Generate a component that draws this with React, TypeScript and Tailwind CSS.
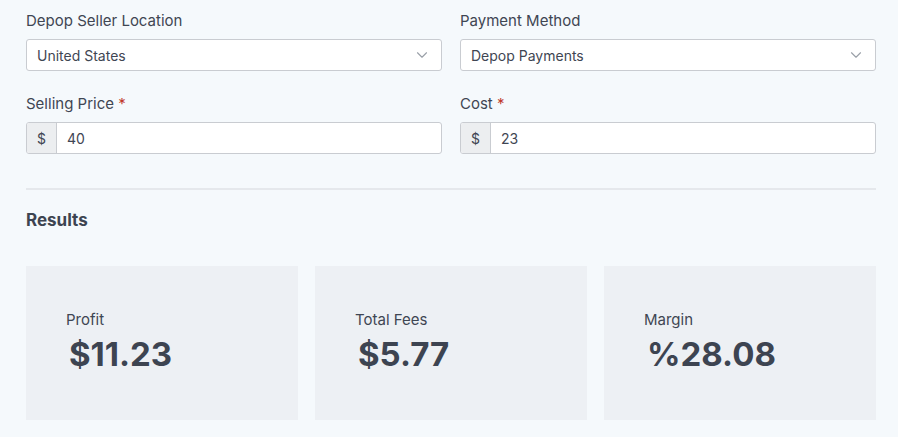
import { ChevronDown } from 'lucide-react';

function Select({ label, value }: { label: string; value: string }) {
  return (
    <div className="flex-1">
      <div className="text-[15px] text-[#3f4653] leading-[20px] mb-[8px]">{label}</div>
      <div className="h-[32px] bg-white border border-[#c9ccd1] rounded-[3px] flex items-center justify-between px-[10px]">
        <span className="text-[14px] text-[#3f4653]">{value}</span>
        <ChevronDown className="w-[18px] h-[18px] text-[#9aa0a8]" strokeWidth={1.5} />
      </div>
    </div>
  );
}

function Money({ label, value }: { label: string; value: string }) {
  return (
    <div className="flex-1">
      <div className="text-[15px] text-[#3f4653] leading-[20px] mb-[8px]">
        {label} <span className="text-[#c0392b]">*</span>
      </div>
      <div className="h-[32px] bg-white border border-[#c9ccd1] rounded-[3px] flex items-stretch overflow-hidden">
        <div className="w-[30px] bg-[#eceef0] border-r border-[#c9ccd1] flex items-center justify-center text-[14px] text-[#3f4653]">$</div>
        <div className="flex items-center px-[10px] text-[14px] text-[#3f4653]">{value}</div>
      </div>
    </div>
  );
}

function Card({ label, value }: { label: string; value: string }) {
  return (
    <div className="flex-1 h-[154px] bg-[#edf0f4] pl-[40px] pt-[44px]">
      <div className="text-[15px] text-[#3f4653] leading-[20px]">{label}</div>
      <div className="text-[33px] font-bold text-[#3d4451] leading-[40px] mt-[4px] ml-[3px]">{value}</div>
    </div>
  );
}

export default function App() {
  return (
    <div className="w-[898px] h-[437px] bg-[#f5f9fc] pl-[26px] pr-[22px] pt-[11px]" style={{ fontFamily: 'Inter, "Noto Sans", sans-serif' }}>
      <div className="flex gap-[18px]">
        <Select label="Depop Seller Location" value="United States" />
        <Select label="Payment Method" value="Depop Payments" />
      </div>
      <div className="flex gap-[18px] mt-[23px]">
        <Money label="Selling Price" value="40" />
        <Money label="Cost" value="23" />
      </div>
      <div className="h-[2px] bg-[#e5e8ec] mt-[34px]" />
      <div className="text-[17px] font-bold text-[#3d4451] mt-[18px] leading-[24px]">Results</div>
      <div className="flex gap-[17px] mt-[34px]">
        <Card label="Profit" value="$11.23" />
        <Card label="Total Fees" value="$5.77" />
        <Card label="Margin" value="%28.08" />
      </div>
    </div>
  );
}
